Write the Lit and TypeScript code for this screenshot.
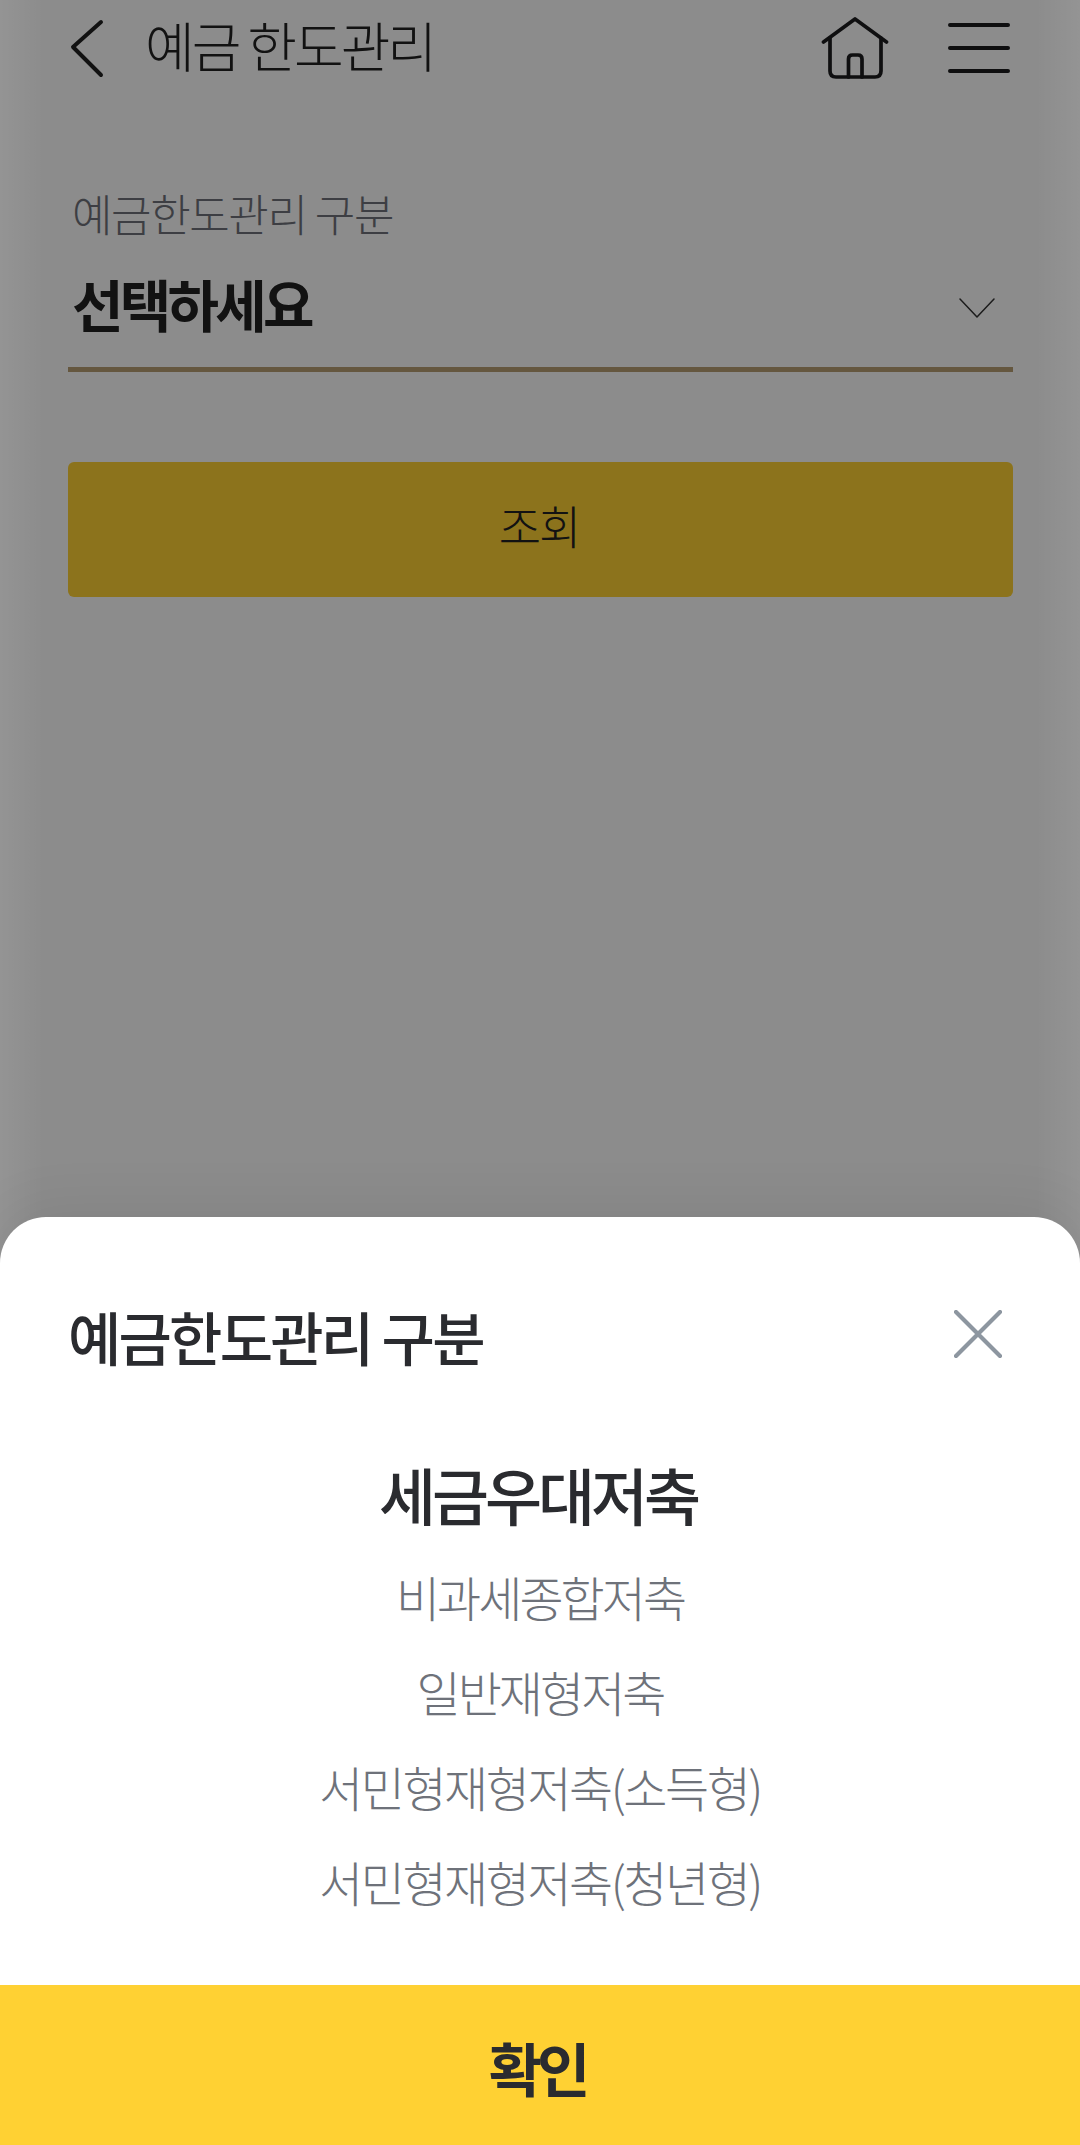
import { LitElement, html, css } from "lit";
import { customElement } from "lit/decorators.js";

@customElement("app-root")
export class AppRoot extends LitElement {
  static styles = css`
    :host { display: block; width: 1080px; height: 2145px; position: relative; overflow: hidden; background: #fff;
      font-family: "Noto Sans CJK KR", "Noto Sans", sans-serif; }
    .page { display: flex; flex-direction: column; height: 100%; }
    .header { display: flex; align-items: center; height: 96px; padding: 0 69px 0 66px; }
    .back { width: 40px; height: 60px; flex: none; }
    .title { flex: 1; margin-left: 39px; padding-bottom: 7px; font-size: 54px; line-height: 89px; letter-spacing: -3px; color: #222; font-weight: 300; }
    .home { width: 68px; height: 64px; margin-right: 58px; }
    .menu { width: 64px; height: 64px; }
    .content { padding: 87px 67px 0 68px; }
    .label { font-size: 44px; line-height: 60px; letter-spacing: -1.4px; color: #70727a; font-weight: 300; padding-left: 4px; }
    .select { display: flex; align-items: center; justify-content: space-between; box-sizing: border-box; height: 129px; border-bottom: 5px solid #b89e74; padding: 0 18px 0 4px; }
    .value { font-size: 56px; font-weight: 700; letter-spacing: -3.8px; color: #222; padding-bottom: 6px; }
    .chev { width: 36px; height: 20px; margin-top: 6px; }
    .btn { margin-top: 90px; height: 135px; box-sizing: border-box; padding: 0 3px 12px 0; border-radius: 6px; background: #ffd133; display: flex; align-items: center; justify-content: center;
      font-size: 46px; letter-spacing: -2px; color: #222; font-weight: 300; }
    .dim { position: absolute; inset: 0; background: linear-gradient(to right, rgba(255,255,255,.07), rgba(255,255,255,0) 44px, rgba(255,255,255,0) 1036px, rgba(255,255,255,.07)), rgba(0,0,0,.45); }
    .sheet { position: absolute; left: 0; right: 0; bottom: 0; height: 928px; background: #fff; border-radius: 46px 46px 0 0; display: flex; flex-direction: column; box-shadow: 0 -6px 60px rgba(0,0,0,.08); }
    .sheet-head { display: flex; align-items: center; justify-content: space-between; height: 122px; padding: 56px 78px 0 68px; }
    .sheet-title { font-size: 58px; font-weight: 500; letter-spacing: -2.8px; color: #2a2b2f; padding-top: 3px; }
    .close { width: 48px; height: 48px; }
    .list { flex: 1; display: flex; flex-direction: column; align-items: center; padding-top: 53px; }
    .item { height: 95px; line-height: 95px; font-size: 48px; font-weight: 300; color: #6e727a; letter-spacing: -3px; }
    .item.wide { letter-spacing: -2.5px; }
    .item.sel { height: 101px; padding-right: 4px; font-size: 62px; line-height: 92px; font-weight: 500; color: #2a2b2f; letter-spacing: -4px; }
    .ok { height: 160px; box-sizing: border-box; padding: 4px 6px 0 0; background: #ffd133; display: flex; align-items: center; justify-content: center; font-size: 58px; letter-spacing: -5px; font-weight: 700; color: #2a2b2f; }
    svg { display: block; fill: none; stroke-linecap: round; stroke-linejoin: round; }
  `;

  render() {
    const items = [
      { t: "비과세종합저축", c: "item" },
      { t: "일반재형저축", c: "item" },
      { t: "서민형재형저축(소득형)", c: "item wide" },
      { t: "서민형재형저축(청년형)", c: "item wide" },
    ];
    return html`
      <div class="page">
        <div class="header">
          <svg class="back" viewBox="0 0 40 60" stroke="#222" stroke-width="4"><path d="M35 4 L7 29 L35 57" /></svg>
          <div class="title">예금 한도관리</div>
          <svg class="home" viewBox="0 0 68 64" stroke="#1c1c1e" stroke-width="3.7">
            <path d="M2.5 26 L34 3 L65.5 26" />
            <path d="M9 22 V55 Q9 61 15 61 H54 Q60 61 60 55 V22" />
            <path d="M27.5 61 V43 Q27.5 39 31.5 39 H37 Q41 39 41 43 V61" />
          </svg>
          <svg class="menu" viewBox="0 0 64 64" stroke="#1c1c1e" stroke-width="4">
            <path d="M3 9 H61 M3 32 H61 M3 55 H61" />
          </svg>
        </div>
        <div class="content">
          <div class="label">예금한도관리 구분</div>
          <div class="select">
            <div class="value">선택하세요</div>
            <svg class="chev" viewBox="0 0 36 20" stroke="#333" stroke-width="1.5"><path d="M1 1 L18 19 L35 1" /></svg>
          </div>
          <div class="btn">조회</div>
        </div>
      </div>
      <div class="dim"></div>
      <div class="sheet">
        <div class="sheet-head">
          <div class="sheet-title">예금한도관리 구분</div>
          <svg class="close" viewBox="0 0 48 48" stroke="#8d96a0" stroke-width="4.2"><path d="M2 2 L46 46 M46 2 L2 46" /></svg>
        </div>
        <div class="list">
          <div class="item sel">세금우대저축</div>
          ${items.map((i) => html`<div class=${i.c}>${i.t}</div>`)}
        </div>
        <div class="ok">확인</div>
      </div>
    `;
  }
}
